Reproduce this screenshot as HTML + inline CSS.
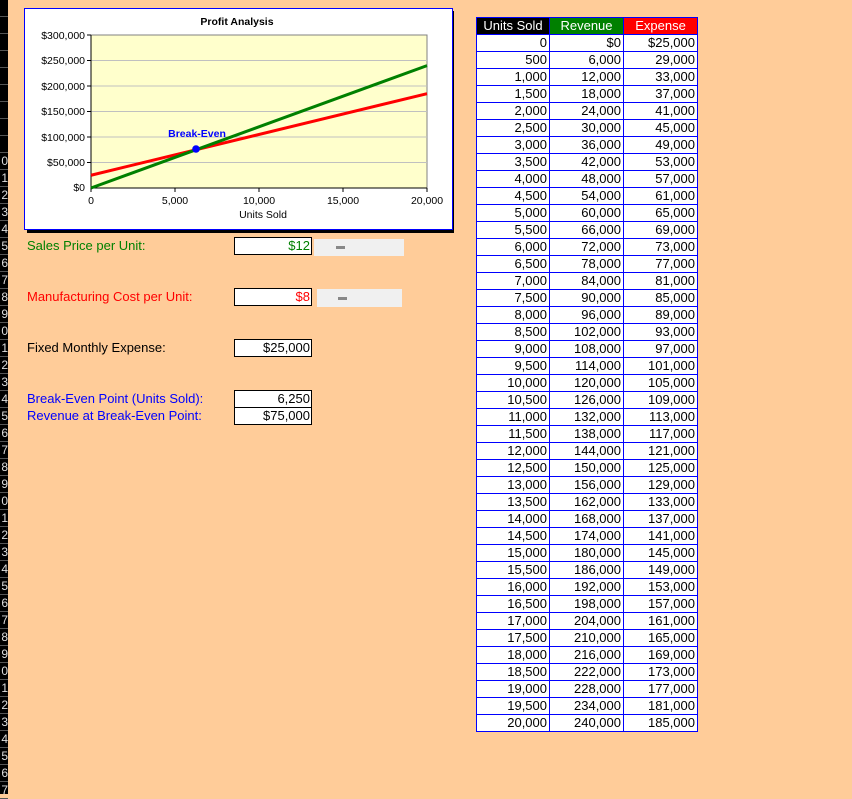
<!DOCTYPE html>
<html><head><style>
body{margin:0;width:852px;height:794px;background:#FFCC99;position:relative;overflow:hidden;font-family:"Liberation Sans",Arial,sans-serif}
.a{position:absolute}
#rs{left:0;top:0;width:8px;height:794px;background:#000}
#rs div{position:absolute;left:0;width:8px;height:16px;border-bottom:1px solid #555;color:#ddd;font-size:12px;line-height:16px;text-align:right;overflow:hidden}
.lab{position:absolute;left:27px;font-size:13px}
.box{position:absolute;left:234px;width:75px;height:16px;border:1px solid #000;background:#fff;font-size:13px;text-align:right;line-height:16px;padding-right:1px}
.sb{position:absolute;background:#f0f0f0}
.sb i{position:absolute;background:#888;height:3px;width:9px}
table{position:absolute;left:476px;top:17px;border-collapse:collapse;font-size:13px}
td{border:1px solid #00f;height:16px;padding:0 2px 0 0;line-height:16px;text-align:right;background:#fff;color:#000}
td:nth-child(1){width:70px}td:nth-child(2){width:71px}td:nth-child(3){width:71px}
th{border:1px solid #00f;height:16px;font-weight:normal;color:#fff;line-height:16px;padding:0;font-size:13px}
</style></head><body>
<div id="rs" class="a">
<div style="top:0"></div><div style="top:17px"></div><div style="top:34px"></div><div style="top:51px"></div><div style="top:68px"></div><div style="top:85px"></div><div style="top:102px"></div><div style="top:119px"></div><div style="top:136px"></div>
<div style="top:153px">0</div><div style="top:170px">1</div><div style="top:187px">2</div><div style="top:204px">3</div><div style="top:221px">4</div><div style="top:238px">5</div><div style="top:255px">6</div><div style="top:272px">7</div><div style="top:289px">8</div><div style="top:306px">9</div><div style="top:323px">0</div><div style="top:340px">1</div><div style="top:357px">2</div><div style="top:374px">3</div><div style="top:391px">4</div><div style="top:408px">5</div><div style="top:425px">6</div><div style="top:442px">7</div><div style="top:459px">8</div><div style="top:476px">9</div><div style="top:493px">0</div><div style="top:510px">1</div><div style="top:527px">2</div><div style="top:544px">3</div><div style="top:561px">4</div><div style="top:578px">5</div><div style="top:595px">6</div><div style="top:612px">7</div><div style="top:629px">8</div><div style="top:646px">9</div><div style="top:663px">0</div><div style="top:680px">1</div><div style="top:697px">2</div><div style="top:714px">3</div><div style="top:731px">4</div><div style="top:748px">5</div><div style="top:765px">6</div><div style="top:782px">7</div>
</div>

<div class="a" style="left:27px;top:11px;width:427px;height:222px;background:#000"></div>
<svg class="a" style="left:24px;top:8px" width="430" height="223" font-family="Liberation Sans,Arial,sans-serif">
<rect x="0.5" y="0.5" width="428" height="221" fill="#fff" stroke="#00f"/>
<text x="213" y="17" font-size="10.5" font-weight="bold" text-anchor="middle">Profit Analysis</text>
<rect x="67" y="27" width="336" height="153" fill="#FFFFCC" stroke="#808080"/>
<g stroke="#c0c0c0" stroke-width="1"><line x1="67" x2="403" y1="52.5" y2="52.5"/><line x1="67" x2="403" y1="78" y2="78"/><line x1="67" x2="403" y1="103.5" y2="103.5"/><line x1="67" x2="403" y1="129" y2="129"/><line x1="67" x2="403" y1="154.5" y2="154.5"/></g>
<line x1="67" y1="27" x2="67" y2="180" stroke="#000"/><line x1="67" y1="180" x2="403" y2="180" stroke="#000"/>
<g stroke="#000"><line x1="63" x2="67" y1="27" y2="27"/><line x1="63" x2="67" y1="52.5" y2="52.5"/><line x1="63" x2="67" y1="78" y2="78"/><line x1="63" x2="67" y1="103.5" y2="103.5"/><line x1="63" x2="67" y1="129" y2="129"/><line x1="63" x2="67" y1="154.5" y2="154.5"/>
<line x1="67" x2="67" y1="180" y2="184"/><line x1="151" x2="151" y1="180" y2="184"/><line x1="235" x2="235" y1="180" y2="184"/><line x1="319" x2="319" y1="180" y2="184"/><line x1="403" x2="403" y1="180" y2="184"/></g>
<g font-size="10.5" text-anchor="end"><text x="61" y="31">$300,000</text><text x="61" y="56">$250,000</text><text x="61" y="82">$200,000</text><text x="61" y="107">$150,000</text><text x="61" y="133">$100,000</text><text x="61" y="158">$50,000</text><text x="61" y="183">$0</text></g>
<g font-size="10.5" text-anchor="middle"><text x="67" y="196">0</text><text x="151" y="196">5,000</text><text x="235" y="196">10,000</text><text x="319" y="196">15,000</text><text x="403" y="196">20,000</text><text x="239" y="210">Units Sold</text></g>
<line x1="67" y1="167.25" x2="403" y2="85.65" stroke="#f00" stroke-width="3"/>
<line x1="67" y1="180" x2="403" y2="57.6" stroke="#008000" stroke-width="3"/>
<circle cx="172" cy="141" r="3.8" fill="#00f"/>
<text x="173" y="129" font-size="10.5" font-weight="bold" fill="#00f" text-anchor="middle">Break-Even</text>
</svg>

<div class="lab" style="top:238px;color:#008000">Sales Price per Unit:</div>
<div class="box" style="top:237px;color:#008000">$12</div>
<div class="sb" style="left:314px;top:239px;width:90px;height:17px"><i style="left:22px;top:7px"></i></div>
<div class="lab" style="top:289px;color:#f00">Manufacturing Cost per Unit:</div>
<div class="box" style="top:288px;color:#f00">$8</div>
<div class="sb" style="left:317px;top:289px;width:85px;height:18px"><i style="left:21px;top:8px"></i></div>
<div class="lab" style="top:340px">Fixed Monthly Expense:</div>
<div class="box" style="top:339px">$25,000</div>
<div class="lab" style="top:391px;color:#00f">Break-Even Point (Units Sold):</div>
<div class="lab" style="top:408px;color:#00f">Revenue at Break-Even Point:</div>
<div class="box" style="top:390px">6,250</div>
<div class="box" style="top:407px">$75,000</div>

<table>
<tr><th style="background:#000">Units Sold</th><th style="background:#008000">Revenue</th><th style="background:#f00">Expense</th></tr>
<tr><td>0</td><td>$0</td><td>$25,000</td></tr>
<tr><td>500</td><td>6,000</td><td>29,000</td></tr>
<tr><td>1,000</td><td>12,000</td><td>33,000</td></tr>
<tr><td>1,500</td><td>18,000</td><td>37,000</td></tr>
<tr><td>2,000</td><td>24,000</td><td>41,000</td></tr>
<tr><td>2,500</td><td>30,000</td><td>45,000</td></tr>
<tr><td>3,000</td><td>36,000</td><td>49,000</td></tr>
<tr><td>3,500</td><td>42,000</td><td>53,000</td></tr>
<tr><td>4,000</td><td>48,000</td><td>57,000</td></tr>
<tr><td>4,500</td><td>54,000</td><td>61,000</td></tr>
<tr><td>5,000</td><td>60,000</td><td>65,000</td></tr>
<tr><td>5,500</td><td>66,000</td><td>69,000</td></tr>
<tr><td>6,000</td><td>72,000</td><td>73,000</td></tr>
<tr><td>6,500</td><td>78,000</td><td>77,000</td></tr>
<tr><td>7,000</td><td>84,000</td><td>81,000</td></tr>
<tr><td>7,500</td><td>90,000</td><td>85,000</td></tr>
<tr><td>8,000</td><td>96,000</td><td>89,000</td></tr>
<tr><td>8,500</td><td>102,000</td><td>93,000</td></tr>
<tr><td>9,000</td><td>108,000</td><td>97,000</td></tr>
<tr><td>9,500</td><td>114,000</td><td>101,000</td></tr>
<tr><td>10,000</td><td>120,000</td><td>105,000</td></tr>
<tr><td>10,500</td><td>126,000</td><td>109,000</td></tr>
<tr><td>11,000</td><td>132,000</td><td>113,000</td></tr>
<tr><td>11,500</td><td>138,000</td><td>117,000</td></tr>
<tr><td>12,000</td><td>144,000</td><td>121,000</td></tr>
<tr><td>12,500</td><td>150,000</td><td>125,000</td></tr>
<tr><td>13,000</td><td>156,000</td><td>129,000</td></tr>
<tr><td>13,500</td><td>162,000</td><td>133,000</td></tr>
<tr><td>14,000</td><td>168,000</td><td>137,000</td></tr>
<tr><td>14,500</td><td>174,000</td><td>141,000</td></tr>
<tr><td>15,000</td><td>180,000</td><td>145,000</td></tr>
<tr><td>15,500</td><td>186,000</td><td>149,000</td></tr>
<tr><td>16,000</td><td>192,000</td><td>153,000</td></tr>
<tr><td>16,500</td><td>198,000</td><td>157,000</td></tr>
<tr><td>17,000</td><td>204,000</td><td>161,000</td></tr>
<tr><td>17,500</td><td>210,000</td><td>165,000</td></tr>
<tr><td>18,000</td><td>216,000</td><td>169,000</td></tr>
<tr><td>18,500</td><td>222,000</td><td>173,000</td></tr>
<tr><td>19,000</td><td>228,000</td><td>177,000</td></tr>
<tr><td>19,500</td><td>234,000</td><td>181,000</td></tr>
<tr><td>20,000</td><td>240,000</td><td>185,000</td></tr>
</table>
</body></html>
